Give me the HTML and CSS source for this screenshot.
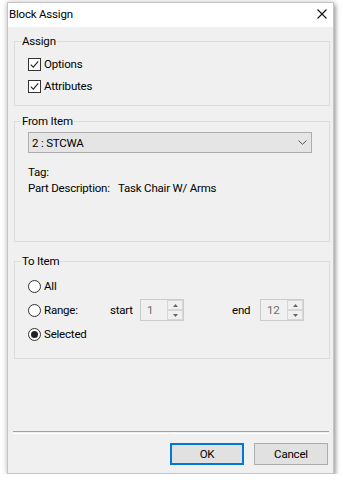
FILE: index.html
```html
<!DOCTYPE html>
<html>
<head>
<meta charset="utf-8">
<link rel="stylesheet" href="styles.css">
</head>
<body>
<div class="window">
  <div class="titlebar">
    <span class="title">Block Assign</span>
    <svg class="close" width="10" height="10" viewBox="0 0 10 10"><path d="M0.5 0.5 L9.5 9.5 M9.5 0.5 L0.5 9.5" stroke="#111" stroke-width="1.1" fill="none"/></svg>
  </div>
  <div class="body">
    <fieldset class="group group-assign">
      <legend>Assign</legend>
      <div class="check-row"><span class="checkbox"><svg width="11" height="11" viewBox="0 0 11 11"><path d="M1.8 5.6 L4.3 8.1 L9.2 2.4" stroke="#222" stroke-width="1.1" fill="none"/></svg></span>Options</div>
      <div class="check-row"><span class="checkbox"><svg width="11" height="11" viewBox="0 0 11 11"><path d="M1.8 5.6 L4.3 8.1 L9.2 2.4" stroke="#222" stroke-width="1.1" fill="none"/></svg></span>Attributes</div>
    </fieldset>
    <fieldset class="group group-from">
      <legend>From Item</legend>
      <div class="combo">
        <span class="combo-text">2 : STCWA</span>
        <svg class="chevron" width="9" height="5" viewBox="0 0 9 5"><path d="M0.5 0.5 L4.5 4.3 L8.5 0.5" stroke="#555" stroke-width="1" fill="none"/></svg>
      </div>
      <div class="info">
        <div class="info-row"><span class="info-label">Tag:</span></div>
        <div class="info-row"><span class="info-label">Part Description:</span><span>Task Chair W/ Arms</span></div>
      </div>
    </fieldset>
    <fieldset class="group group-to">
      <legend>To Item</legend>
      <div class="radio-row"><span class="radio"></span>All</div>
      <div class="radio-row">
        <span class="radio-option"><span class="radio"></span>Range:</span>
        <span class="spin-label">start</span>
        <span class="spin">
          <span class="spin-value">1</span>
          <span class="spin-buttons">
            <span class="spin-btn"><svg width="5" height="3" viewBox="0 0 5 3"><path d="M2.5 0 L5 3 L0 3 Z" fill="#666"/></svg></span>
            <span class="spin-btn"><svg width="5" height="3" viewBox="0 0 5 3"><path d="M0 0 L5 0 L2.5 3 Z" fill="#666"/></svg></span>
          </span>
        </span>
        <span class="spin-label end">end</span>
        <span class="spin">
          <span class="spin-value">12</span>
          <span class="spin-buttons">
            <span class="spin-btn"><svg width="5" height="3" viewBox="0 0 5 3"><path d="M2.5 0 L5 3 L0 3 Z" fill="#666"/></svg></span>
            <span class="spin-btn"><svg width="5" height="3" viewBox="0 0 5 3"><path d="M0 0 L5 0 L2.5 3 Z" fill="#666"/></svg></span>
          </span>
        </span>
      </div>
      <div class="radio-row"><span class="radio selected"></span>Selected</div>
    </fieldset>
    <div class="spacer"></div>
    <div class="separator"></div>
    <div class="buttons">
      <button class="btn btn-default">OK</button>
      <button class="btn">Cancel</button>
    </div>
  </div>
</div>
</body>
</html>
```
FILE: styles.css
```css
html, body {
  margin: 0;
  padding: 0;
  background: #ffffff;
}
body {
  font-family: Roboto, "Noto Sans", "Liberation Sans", sans-serif;
  font-size: 11.5px;
  letter-spacing: -0.2px;
  color: #000;
  padding: 2px 0 0 7px;
}
.window {
  box-sizing: border-box;
  width: 327px;
  height: 472px;
  border: 1px solid #c4c4c4;
  background: #f0f0f0;
  display: flex;
  flex-direction: column;
  box-shadow: 0 0 6px rgba(0,0,0,0.22), 2px 3px 4px rgba(0,0,0,0.28);
}
.titlebar {
  box-sizing: border-box;
  height: 24px;
  background: #ffffff;
  display: flex;
  align-items: center;
  justify-content: space-between;
  padding: 0 6px 3px 1px;
  flex: none;
}
.title {
  font-size: 11.5px;
  line-height: 14px;
}
.close {
  display: block;
  margin-top: 1px;
}
.body {
  flex: 1;
  display: flex;
  flex-direction: column;
  padding: 0 3px 8px 6px;
}
.group {
  box-sizing: border-box;
  margin: 0;
  min-width: 0;
  border: 1px solid #dcdcdc;
  padding: 0 16px 0 13px;
  flex: none;
}
.group legend {
  margin-left: -7px;
  padding: 0 1px;
  line-height: 14px;
}
.group-assign {
  margin-top: 7px;
  height: 72px;
  padding-top: 5px;
}
.group-from {
  margin-top: 8px;
  height: 128px;
  padding-top: 4px;
}
.group-to {
  margin-top: 12px;
  height: 105px;
  padding-top: 6px;
}
.check-row {
  height: 22px;
  display: flex;
  align-items: center;
}
.checkbox {
  box-sizing: border-box;
  width: 13px;
  height: 13px;
  border: 1px solid #333;
  background: #fff;
  display: flex;
  align-items: center;
  justify-content: center;
  margin-right: 3px;
}
.checkbox svg { display: block; }
.combo {
  box-sizing: border-box;
  width: 284px;
  height: 21px;
  border: 1px solid #adadad;
  background: #e5e5e5;
  display: flex;
  align-items: center;
  justify-content: space-between;
  padding: 0 4px 0 3px;
}
.chevron { display: block; }
.info {
  margin-top: 11px;
}
.info-row {
  height: 16px;
  display: flex;
  align-items: center;
}
.info-label {
  width: 90px;
  flex: none;
}
.radio-row {
  height: 24px;
  display: flex;
  align-items: center;
}
.radio-option {
  width: 82px;
  display: flex;
  align-items: center;
  flex: none;
}
.radio {
  box-sizing: border-box;
  width: 13px;
  height: 13px;
  border: 1px solid #333;
  border-radius: 50%;
  background: #fff;
  margin-right: 3px;
  flex: none;
  display: flex;
  align-items: center;
  justify-content: center;
}
.radio.selected::after {
  content: "";
  width: 7px;
  height: 7px;
  border-radius: 50%;
  background: #222;
}
.spin-label {
  width: 30px;
  flex: none;
}
.spin-label.end {
  margin-left: 48px;
  width: 28px;
}
.spin {
  box-sizing: border-box;
  width: 44px;
  height: 22px;
  border: 1px solid #cccccc;
  background: #f0f0f0;
  display: flex;
  flex: none;
}
.spin-value {
  flex: 1;
  padding-left: 6px;
  color: #6d6d6d;
  line-height: 20px;
}
.spin-buttons {
  width: 16px;
  display: flex;
  flex-direction: column;
}
.spin-btn {
  box-sizing: border-box;
  flex: 1;
  border: 1px solid #d6d6d6;
  display: flex;
  align-items: center;
  justify-content: center;
  background: #f0f0f0;
}
.spin-btn svg { display: block; }
.spacer {
  flex: 1;
}
.separator {
  height: 1px;
  border-top: 1px solid #a0a0a0;
  border-bottom: 1px solid #ffffff;
  margin: 0 1px 0 -1px;
}
.buttons {
  display: flex;
  justify-content: flex-end;
  gap: 10px;
  margin-top: 9px;
  padding-right: 2px;
}
.btn {
  box-sizing: border-box;
  width: 74px;
  height: 22px;
  border: 1px solid #adadad;
  background: #e1e1e1;
  font-family: Roboto, "Noto Sans", "Liberation Sans", sans-serif;
  font-size: 11.5px;
  letter-spacing: -0.2px;
  color: #000;
  padding: 0;
  margin: 0;
}
.btn-default {
  border: 2px solid #0078d7;
}
```
